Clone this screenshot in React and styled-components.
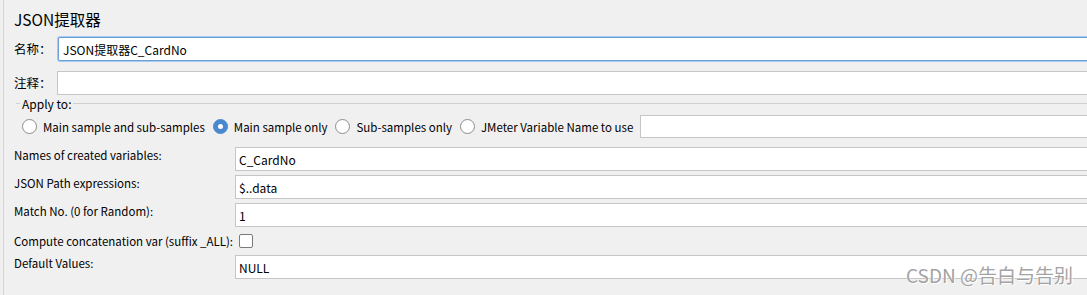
import React from 'react';
import styled, { createGlobalStyle } from 'styled-components';

const GlobalStyle = createGlobalStyle`
  html, body {
    margin: 0;
    background: #f0f0f0;
    overflow: hidden;
  }
  body {
    font-family: "Noto Sans CJK SC", "Noto Sans", sans-serif;
    font-size: 11.5px;
    color: #000;
  }
`;

const Panel = styled.div`
  position: relative;
  height: 295px;
  box-sizing: border-box;
  margin-left: 3px;
  border-left: 1px solid #d4d4d4;
  padding: 6px 0 0 10px;
`;

const Title = styled.h1`
  margin: 0 0 5px;
  font-size: 15.5px;
  font-weight: 400;
  line-height: 26px;
  height: 26px;
`;

const FieldRow = styled.div`
  display: flex;
  align-items: center;
  margin-bottom: ${(p) => p.$gap || 0}px;
`;

const RowLabel = styled.label`
  width: ${(p) => p.$width}px;
  flex: none;
  font-size: 12.5px;
  line-height: 16px;
`;

const TextBox = styled.input`
  flex: 1;
  min-width: 0;
  height: 24px;
  box-sizing: border-box;
  margin: 0 -8px 0 0;
  padding: 0 ${(p) => (p.$focused ? 4 : 3)}px;
  border: 1px solid ${(p) => (p.$focused ? '#6e9fd7' : '#c6c6c6')};
  border-radius: ${(p) => (p.$focused ? '2px' : '0')};
  box-shadow: ${(p) => (p.$focused ? '0 0 0 1px #a6cbf1' : 'none')};
  background: #fff;
  font: inherit;
  font-size: 12px;
  color: #000;
  outline: none;
`;

const GroupTitle = styled.div`
  display: flex;
  align-items: center;
  height: 17px;
  margin-left: 2px;
  line-height: 17px;
  font-size: 12px;

  &::before {
    content: '';
    width: 4px;
    height: 1px;
    margin-right: 2px;
    background: #cfcfcf;
  }

  &::after {
    content: '';
    flex: 1;
    height: 1px;
    margin-left: 2px;
    background: #cfcfcf;
  }
`;

const RadioRow = styled.div`
  display: flex;
  align-items: center;
  height: 23px;
  margin-top: 3px;
  padding-left: 8px;
`;

const Option = styled.label`
  display: flex;
  align-items: center;
  gap: 6px;
  margin-right: 8px;
  white-space: nowrap;
`;

const Radio = styled.input.attrs({ type: 'radio', readOnly: true })`
  appearance: none;
  margin: 0;
  width: 15px;
  height: 15px;
  box-sizing: border-box;
  border-radius: 50%;
  border: 1px solid ${(p) => (p.checked ? '#4a88cf' : '#8c8c8c')};
  background: ${(p) => (p.checked ? '#4a88cf' : '#fff')};
  position: relative;

  &:checked::after {
    content: '';
    position: absolute;
    left: 4px;
    top: 4px;
    width: 5px;
    height: 5px;
    border-radius: 50%;
    background: #fff;
  }
`;

const VarBox = styled(TextBox)`
  height: 23px;
  margin-left: -1px;
`;

const Form = styled.div`
  display: grid;
  grid-template-columns: 221px 1fr;
  row-gap: 4px;
  margin-top: 9px;
`;

const FormLabel = styled.label`
  align-self: ${(p) => (p.$center ? 'center' : 'start')};
  line-height: 16px;
  white-space: nowrap;
`;

const FormInput = styled(TextBox)`
  margin-right: -8px;
`;

const CheckCell = styled.div`
  display: flex;
  align-items: center;
  height: 20px;
  padding-left: 4px;
`;

const Checkbox = styled.input.attrs({ type: 'checkbox', readOnly: true })`
  appearance: none;
  margin: 0;
  width: 14px;
  height: 14px;
  box-sizing: border-box;
  border: 1px solid #7a7a7a;
  border-radius: 2px;
  background: #fff;
`;

const Watermark = styled.div`
  position: absolute;
  right: 14px;
  bottom: 8px;
  font-size: 19px;
  line-height: 24px;
  color: #a3a3a3;
  text-shadow: 1px 1px 0 #fff, 0 0 1px #fff;
  pointer-events: none;
`;

const fields = [
  { label: 'Names of created variables:', value: 'C_CardNo' },
  { label: 'JSON Path expressions:', value: '$..data' },
  { label: 'Match No. (0 for Random):', value: '1' },
];

export default function App() {
  return (
    <>
      <GlobalStyle />
      <Panel>
        <Title>JSON提取器</Title>

        <FieldRow $gap={10}>
          <RowLabel $width={44}>名称：</RowLabel>
          <TextBox $focused readOnly value="JSON提取器C_CardNo" />
        </FieldRow>
        <FieldRow>
          <RowLabel $width={43}>注释：</RowLabel>
          <TextBox readOnly value="" />
        </FieldRow>

        <GroupTitle>Apply to:</GroupTitle>
        <RadioRow>
          <Option><Radio name="scope" />Main sample and sub-samples</Option>
          <Option><Radio name="scope" checked />Main sample only</Option>
          <Option><Radio name="scope" />Sub-samples only</Option>
          <Option><Radio name="scope" />JMeter Variable Name to use</Option>
          <VarBox readOnly value="" />
        </RadioRow>

        <Form>
          {fields.map((f) => (
            <React.Fragment key={f.label}>
              <FormLabel>{f.label}</FormLabel>
              <FormInput readOnly value={f.value} />
            </React.Fragment>
          ))}
          <FormLabel $center>Compute concatenation var (suffix _ALL):</FormLabel>
          <CheckCell><Checkbox /></CheckCell>
          <FormLabel>Default Values:</FormLabel>
          <FormInput readOnly value="NULL" />
        </Form>

        <Watermark>CSDN @告白与告别</Watermark>
      </Panel>
    </>
  );
}
